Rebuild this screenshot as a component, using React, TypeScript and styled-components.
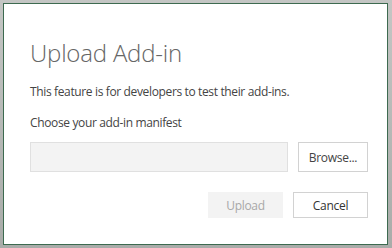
import React from 'react';
import styled, { createGlobalStyle } from 'styled-components';

const GlobalStyle = createGlobalStyle`
  html, body {
    margin: 0;
    padding: 0;
    background: #b4b8b5;
  }
  * {
    box-sizing: border-box;
  }
`;

const Frame = styled.div`
  width: 392px;
  height: 248px;
  padding: 3px 4px 3px 3px;
  background: linear-gradient(#c4c6c4, #a9aca9);
`;

const Dialog = styled.div`
  height: 100%;
  background: #ffffff;
  border: 1px solid #3d6a50;
  padding: 34px 19px 0 26px;
  font-family: 'Open Sans', 'Noto Sans', sans-serif;
  display: flex;
  flex-direction: column;
`;

const Title = styled.h1`
  margin: 0;
  font-size: 24px;
  line-height: 30px;
  font-weight: 300;
  color: #666666;
  letter-spacing: -0.2px;
`;

const Text = styled.p<{ gap: number }>`
  margin: ${p => p.gap}px 0 0;
  font-size: 12px;
  line-height: 16px;
  color: #444444;
  letter-spacing: -0.36px;
`;

const FileRow = styled.div`
  display: flex;
  gap: 10px;
  margin-top: 11px;
`;

const FileInput = styled.div`
  flex: 1;
  height: 30px;
  background: #f3f3f3;
  border: 1px solid #e0e0e0;
`;

const Button = styled.button<{ disabled?: boolean }>`
  width: 70px;
  height: 30px;
  padding: 0;
  font-family: inherit;
  font-size: 12px;
  letter-spacing: -0.3px;
  background: ${p => (p.disabled ? '#f3f3f3' : '#ffffff')};
  color: ${p => (p.disabled ? '#a8a8a8' : '#444444')};
  border: 1px solid ${p => (p.disabled ? '#f3f3f3' : '#d2d2d2')};
  cursor: pointer;
`;

const Actions = styled.div`
  display: flex;
  justify-content: flex-end;
  gap: 10px;
  margin-top: 20px;
`;

const ActionButton = styled(Button)`
  width: 75px;
  height: 26px;
  color: ${p => (p.disabled ? '#a8a8a8' : '#333333')};
`;

export default function App() {
  return (
    <>
      <GlobalStyle />
      <Frame>
        <Dialog>
          <Title>Upload Add-in</Title>
          <Text gap={16}>This feature is for developers to test their add-ins.</Text>
          <Text gap={15}>Choose your add-in manifest</Text>
          <FileRow>
            <FileInput />
            <Button>Browse...</Button>
          </FileRow>
          <Actions>
            <ActionButton disabled>Upload</ActionButton>
            <ActionButton>Cancel</ActionButton>
          </Actions>
        </Dialog>
      </Frame>
    </>
  );
}
